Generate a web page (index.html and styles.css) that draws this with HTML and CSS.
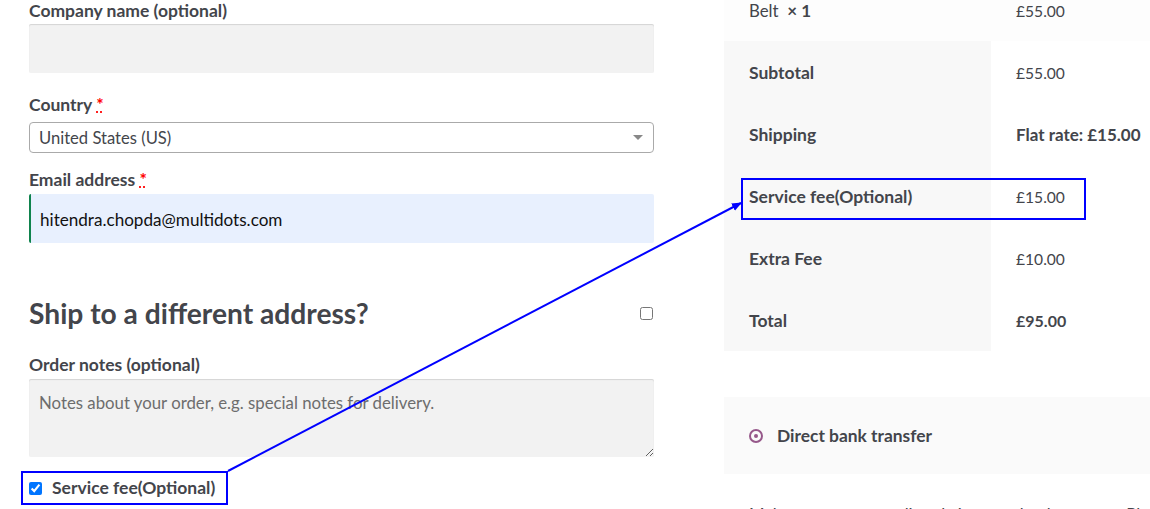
FILE: index.html
```html
<!DOCTYPE html>
<html lang="en">
<head>
<meta charset="utf-8">
<title>Checkout</title>
<link rel="stylesheet" href="styles.css">
</head>
<body>
<div class="page">
  <div class="billing">
    <div class="field field-company">
      <label class="lbl">Company name (optional)</label>
      <div class="text-input"></div>
    </div>
    <div class="field field-country">
      <label class="lbl">Country <abbr class="req">*</abbr></label>
      <div class="select">
        <span class="select-value">United States (US)</span>
        <span class="select-arrow"></span>
      </div>
    </div>
    <div class="field field-email">
      <label class="lbl">Email address <abbr class="req">*</abbr></label>
      <div class="text-input filled">hitendra.chopda@multidots.com</div>
    </div>
    <h3 class="ship-heading">
      <span>Ship to a different address?</span>
      <input type="checkbox" class="ship-check">
    </h3>
    <div class="field field-notes">
      <label class="lbl">Order notes (optional)</label>
      <textarea class="notes" placeholder="Notes about your order, e.g. special notes for delivery."></textarea>
    </div>
    <label class="fee-option">
      <input type="checkbox" checked>
      <span>Service fee(Optional)</span>
    </label>
  </div>

  <div class="review">
    <table class="totals">
      <tr class="item-row">
        <td class="c-name">Belt&nbsp; <strong class="qty">× 1</strong></td>
        <td class="c-val"><span class="amount">£55.00</span></td>
      </tr>
      <tr><th>Subtotal</th><td><span class="amount">£55.00</span></td></tr>
      <tr><th>Shipping</th><td><strong>Flat rate: £15.00</strong></td></tr>
      <tr><th>Service fee(Optional)</th><td><span class="amount">£15.00</span></td></tr>
      <tr><th>Extra Fee</th><td><span class="amount">£10.00</span></td></tr>
      <tr><th>Total</th><td><strong class="amount">£95.00</strong></td></tr>
    </table>

    <div class="payment">
      <span class="radio"></span>
      <span class="pay-label">Direct bank transfer</span>
    </div>
    <p class="pay-desc">Make your payment directly into our bank account. Please use your Order ID as the payment reference.</p>
  </div>
</div>

<svg class="annot" width="1150" height="509" viewBox="0 0 1150 509">
  <defs>
    <marker id="ah" markerWidth="10" markerHeight="10" refX="9" refY="5" orient="auto" markerUnits="userSpaceOnUse">
      <path d="M0,1 L10,5 L0,9 Z" fill="#0000ff"/>
    </marker>
  </defs>
  <rect x="22" y="472" width="205" height="32" fill="none" stroke="#0000ff" stroke-width="2"/>
  <rect x="742" y="179" width="343" height="40" fill="none" stroke="#0000ff" stroke-width="2"/>
  <line x1="228" y1="471" x2="741" y2="203" stroke="#0000ff" stroke-width="2" marker-end="url(#ah)"/>
</svg>
</body>
</html>
```

FILE: styles.css
```css
* { box-sizing: border-box; }
html, body {
  margin: 0;
  padding: 0;
  width: 1150px;
  height: 509px;
  overflow: hidden;
  background: #fff;
}
body {
  font-family: "Lato", "Liberation Sans", sans-serif;
  color: #43454b;
  font-size: 16.8px;
  position: relative;
}
.page {
  display: flex;
  gap: 70px;
  padding-left: 29px;
}
.billing {
  width: 625px;
  flex: none;
  display: flex;
  flex-direction: column;
}
.review {
  flex: 1;
  min-width: 0;
  margin-top: -21px;
  overflow: hidden;
}
.lbl {
  display: block;
  font-weight: 700;
  font-size: 17.5px;
  line-height: 22px;
}
.req {
  color: #ff0000;
  text-decoration: underline dotted;
  border: 0;
  font-weight: 700;
}
.text-input {
  height: 49px;
  background: #f2f2f2;
  box-shadow: inset 0 1px 1px rgba(0,0,0,0.125);
  border-radius: 2px;
}
.field-company .lbl { margin-bottom: 2px; }
.field-country { margin-top: 21px; }
.field-country .lbl { margin-bottom: 6px; }
.select {
  height: 31px;
  border: 1px solid #aaa;
  border-radius: 4px;
  display: flex;
  align-items: center;
  justify-content: space-between;
  padding: 0 10px 0 9px;
  font-size: 16.6px;
}
.select-arrow {
  width: 0;
  height: 0;
  border-left: 5px solid transparent;
  border-right: 5px solid transparent;
  border-top: 5px solid #888;
}
.field-email { margin-top: 16px; }
.field-email .lbl { margin-bottom: 3px; }
.text-input.filled {
  background: #e8f0fe;
  box-shadow: none;
  border-left: 2px solid #0f834d;
  color: #111;
  display: flex;
  align-items: center;
  padding: 1px 0 0 9px;
  font-size: 17.1px;
}
.ship-heading {
  margin: 53px 0 0;
  font-size: 28.2px;
  font-weight: 700;
  line-height: 34px;
  display: flex;
  align-items: center;
  justify-content: space-between;
}
.ship-check {
  margin: 1px 1px 0 0;
  width: 13px;
  height: 13px;
}
.field-notes { margin-top: 24px; }
.field-notes .lbl { margin-bottom: 3px; }
.notes {
  display: block;
  width: 100%;
  height: 78px;
  border: 0;
  background: #f2f2f2;
  box-shadow: inset 0 1px 1px rgba(0,0,0,0.125);
  border-radius: 2px;
  padding: 14px 10px;
  font-family: inherit;
  font-size: 16.8px;
  line-height: 1.2;
  color: #43454b;
  resize: vertical;
}
.notes::placeholder { color: #6d6d6d; }
.fee-option {
  margin-top: 20px;
  display: flex;
  align-items: center;
  gap: 10px;
  font-weight: 700;
  font-size: 17.5px;
  line-height: 22px;
}
.fee-option input {
  margin: 0;
  width: 13px;
  height: 13px;
}
.totals {
  width: 426px;
  border-collapse: collapse;
  font-size: 16.8px;
}
.totals th, .totals td {
  height: 62px;
  padding: 0 0 0 25px;
  text-align: left;
  vertical-align: middle;
}
.totals th {
  width: 267px;
  background: #f8f8f8;
  font-weight: 700;
  font-size: 17.5px;
}
.totals td { background: #fff; }
.totals td strong { font-size: 17px; }
.totals .item-row td { background: #fdfdfd; }
.totals .amount { font-size: 15.6px; }
.totals strong.amount { font-size: 16px; }
.qty { font-weight: 700; }
.payment {
  margin-top: 46px;
  height: 77px;
  background: #fafafa;
  display: flex;
  align-items: center;
  padding-left: 25px;
  gap: 14px;
}
.radio {
  width: 14px;
  height: 14px;
  border-radius: 50%;
  border: 2px solid #96588a;
  display: flex;
  align-items: center;
  justify-content: center;
}
.radio::after {
  content: "";
  width: 4px;
  height: 4px;
  border-radius: 50%;
  background: #96588a;
}
.pay-label { font-weight: 700; font-size: 17.4px; }
.pay-desc {
  margin: 29px 0 0;
  padding-left: 25px;
  white-space: nowrap;
  line-height: 24px;
  font-size: 16.8px;
}
.annot {
  position: absolute;
  left: 0;
  top: 0;
  pointer-events: none;
}
```
